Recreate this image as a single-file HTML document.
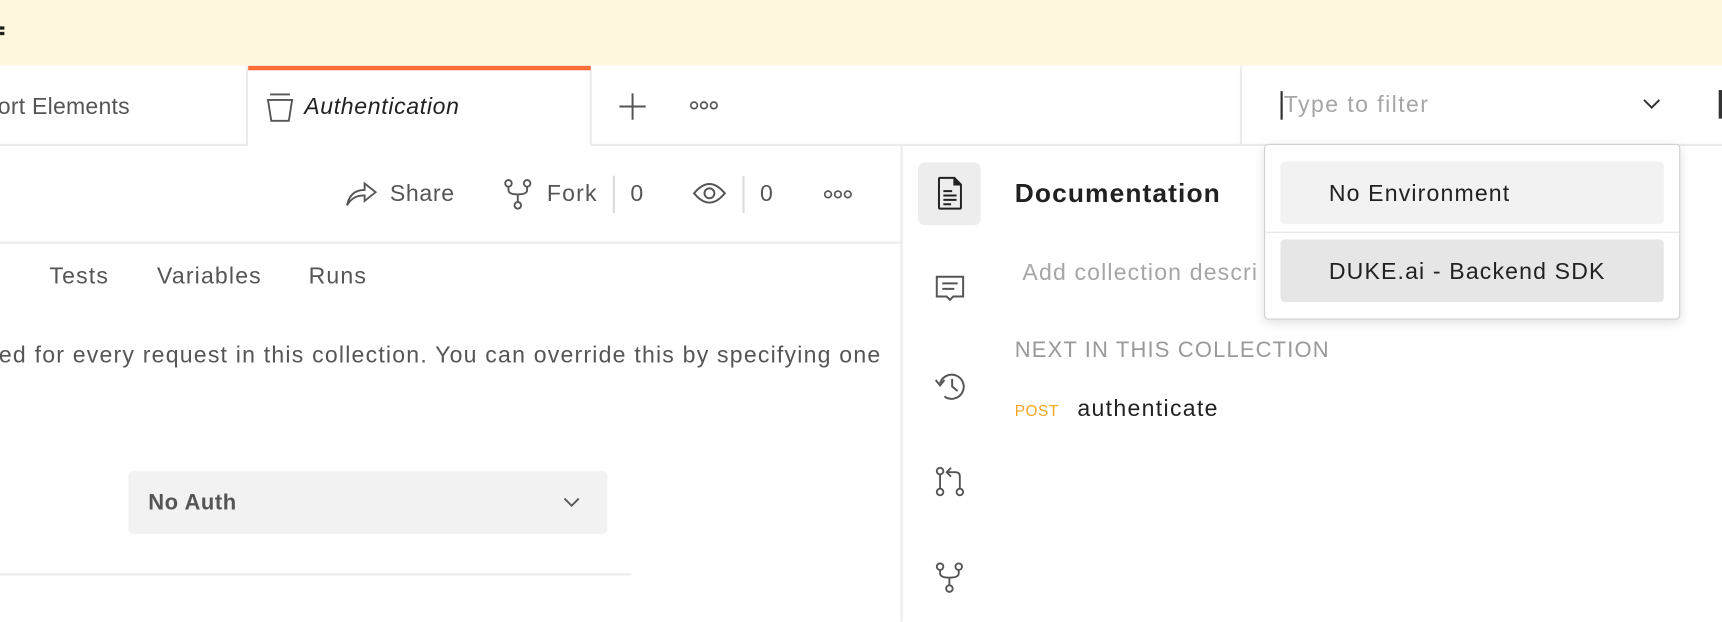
<!DOCTYPE html>
<html><head><meta charset="utf-8"><style>
html,body{margin:0;padding:0;width:1722px;height:620px;overflow:hidden;background:#fff}
#s{position:absolute;left:0;top:0;width:1568px;height:566px;transform:scale(1.09821);transform-origin:0 0;font-family:"Liberation Sans",sans-serif;color:#212121}
.a{position:absolute;white-space:nowrap}
.t{font-size:21px;line-height:24px;letter-spacing:1.05px}
svg{position:absolute;overflow:visible}
</style></head><body><div id="s">
<div class="a" style="left:0;top:0;width:1568px;height:60px;background:#fff8de"></div>
<div class="a" style="left:0;top:24px;width:4px;height:3px;background:#222"></div>
<div class="a" style="left:0;top:29px;width:4px;height:3px;background:#222"></div>
<div class="a" style="left:0;top:131px;width:1568px;height:2px;background:#ececec"></div>
<div class="a" style="left:224px;top:60px;width:2px;height:72px;background:#ececec"></div>
<div class="a" style="left:226px;top:60px;width:312px;height:74px;background:#fff;border-top:4px solid #ff6c37;box-sizing:border-box"></div>
<div class="a" style="left:537px;top:64px;width:2px;height:68px;background:#ececec"></div>
<div class="a" style="left:1129px;top:60px;width:2px;height:72px;background:#ececec"></div>
<div class="a t" style="left:-2px;top:86px;color:#555;letter-spacing:0.2px">ort Elements</div>
<svg style="left:243px;top:85px" width="24" height="26" viewBox="0 0 24 26" fill="none" stroke="#555" stroke-width="1.7"><path d="M3 1H21M1 6H23L20 25H4Z"/></svg>
<div class="a t" style="left:277px;top:86px;font-style:italic;color:#222;letter-spacing:0.6px">Authentication</div>
<svg style="left:564px;top:85px" width="24" height="24" fill="none" stroke="#555" stroke-width="1.8"><path d="M12 0V24M0 12H24"/></svg>
<svg style="left:628px;top:91px" width="26" height="10" fill="none" stroke="#555" stroke-width="1.5"><circle cx="4" cy="5" r="3"/><circle cx="13" cy="5" r="3"/><circle cx="22" cy="5" r="3"/></svg>
<div class="a t" style="left:1169px;top:84px;color:#a6a6a6;letter-spacing:1.3px">Type to filter</div>
<div class="a" style="left:1166px;top:83px;width:1.5px;height:26px;background:#333"></div>
<svg style="left:1496px;top:90px" width="16" height="10" fill="none" stroke="#333" stroke-width="1.8"><path d="M1 1L8 8L15 1"/></svg>
<div class="a" style="left:1565px;top:82px;width:3px;height:26px;background:#333"></div>
<div class="a" style="left:0;top:220px;width:820px;height:2px;background:#ececec"></div>
<div class="a" style="left:820px;top:133px;width:2px;height:433px;background:#ececec"></div>
<svg style="left:315px;top:164px" width="28" height="24" fill="none" stroke="#555" stroke-width="1.7"><path d="M1 23C3 13 9 9 17 9V3L27 11L17 19V14C10 14 5 16 1 23Z"/></svg>
<div class="a t" style="left:355px;top:165px;color:#555;letter-spacing:0.6px">Share</div>
<svg style="left:459px;top:163px" width="26" height="28" fill="none" stroke="#555" stroke-width="1.7"><circle cx="4" cy="4" r="3"/><circle cx="21" cy="4" r="3"/><circle cx="12.5" cy="24" r="3"/><path d="M4 7V10Q4 14 12.5 14Q21 14 21 10V7M12.5 14V21"/></svg>
<div class="a t" style="left:498px;top:165px;color:#555">Fork</div>
<div class="a" style="left:558px;top:160px;width:2px;height:34px;background:#ddd"></div>
<div class="a t" style="left:574px;top:165px;color:#555">0</div>
<svg style="left:631px;top:165px" width="30" height="22" fill="none" stroke="#555" stroke-width="1.8"><path d="M1 11Q15 -6 29 11Q15 28 1 11Z"/><circle cx="15" cy="11" r="4.5"/></svg>
<div class="a" style="left:676px;top:160px;width:2px;height:34px;background:#ddd"></div>
<div class="a t" style="left:692px;top:165px;color:#555">0</div>
<svg style="left:750px;top:172px" width="26" height="10" fill="none" stroke="#555" stroke-width="1.5"><circle cx="4" cy="5" r="3"/><circle cx="13" cy="5" r="3"/><circle cx="22" cy="5" r="3"/></svg>
<div class="a t" style="left:45px;top:240px;color:#555">Tests</div>
<div class="a t" style="left:143px;top:240px;color:#555">Variables</div>
<div class="a t" style="left:281px;top:240px;color:#555">Runs</div>
<div class="a t" style="left:-1px;top:312px;color:#555;letter-spacing:1.1px">ed for every request in this collection. You can override this by specifying one</div>
<div class="a" style="left:117px;top:429px;width:436px;height:57px;background:#f2f2f2;border-radius:4px"></div>
<div class="a t" style="left:135px;top:446px;font-weight:bold;color:#555;font-size:20px;letter-spacing:0.5px">No Auth</div>
<svg style="left:513px;top:453px" width="15" height="9" fill="none" stroke="#555" stroke-width="1.7"><path d="M1 1L7.5 7.5L14 1"/></svg>
<div class="a" style="left:0;top:522px;width:575px;height:2px;background:#ececec"></div>
<div class="a" style="left:836px;top:148px;width:57px;height:57px;background:#ededed;border-radius:6px"></div>
<svg style="left:854px;top:161px" width="22" height="30" fill="none" stroke="#222" stroke-width="1.8"><path d="M1 2Q1 1 2 1H15L21 7V28Q21 29 20 29H2Q1 29 1 28Z"/><path d="M15 1V7H21" fill="#222"/><path d="M5 13H13M5 17H17M5 21H17M5 25H12"/></svg>
<svg style="left:852px;top:251px" width="26" height="26" fill="none" stroke="#555" stroke-width="1.8"><path d="M1 1H25V19H16L13 22L10 19H1Z"/><path d="M6 7H20M6 12H17"/></svg>
<svg style="left:851px;top:338px" width="30" height="28" fill="none" stroke="#555" stroke-width="1.8"><path d="M5 11A11 11 0 1 1 9 23"/><path d="M1 8L5 13L9 8"/><path d="M16 7V14L21 18"/></svg>
<svg style="left:852px;top:425px" width="26" height="28" fill="none" stroke="#555" stroke-width="1.7"><circle cx="4" cy="4" r="3"/><circle cx="4" cy="23" r="3"/><circle cx="22" cy="23" r="3"/><path d="M4 7V20M22 20V9Q22 5 18 5H11M14 1L10 5L14 9"/></svg>
<svg style="left:852px;top:512px" width="26" height="28" fill="none" stroke="#555" stroke-width="1.7"><circle cx="4" cy="4" r="3"/><circle cx="21" cy="4" r="3"/><circle cx="12.5" cy="24" r="3"/><path d="M4 7V10Q4 14 12.5 14Q21 14 21 10V7M12.5 14V21"/></svg>
<div class="a" style="left:924px;top:163px;font-size:24px;line-height:28px;font-weight:bold;color:#212121;letter-spacing:1px">Documentation</div>
<div class="a t" style="left:931px;top:237px;color:#a6a6a6">Add collection descri</div>
<div class="a t" style="left:924px;top:307px;color:#999;font-size:20px">NEXT IN THIS COLLECTION</div>
<div class="a" style="left:924px;top:366px;font-size:14px;color:#f5a623;letter-spacing:0.5px">POST</div>
<div class="a t" style="left:981px;top:361px;color:#212121;letter-spacing:1.2px">authenticate</div>
<div class="a" style="left:1151px;top:131px;width:379px;height:160px;background:#fff;border:1px solid #d0d0d0;border-radius:4px;box-sizing:border-box;box-shadow:0 3px 10px rgba(0,0,0,.12)"></div>
<div class="a" style="left:1166px;top:147px;width:349px;height:57px;background:#f2f2f2;border-radius:4px"></div>
<div class="a t" style="left:1210px;top:165px;color:#212121">No Environment</div>
<div class="a" style="left:1152px;top:211px;width:377px;height:1px;background:#e3e3e3"></div>
<div class="a" style="left:1166px;top:218px;width:349px;height:57px;background:#e6e6e6;border-radius:4px"></div>
<div class="a t" style="left:1210px;top:236px;color:#212121">DUKE.ai - Backend SDK</div>
</div></body></html>
